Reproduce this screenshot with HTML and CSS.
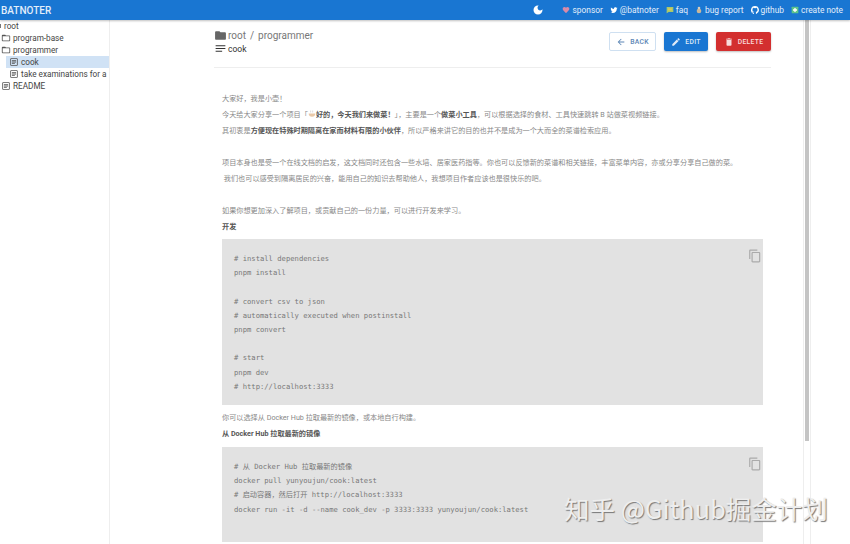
FILE: index.html
```html
<!DOCTYPE html>
<html lang="zh">
<head>
    <meta charset="UTF-8">
    <title>BatNoter - cook</title>
    <link rel="stylesheet" href="styles.css">
</head>
<body>
    <header class="topbar">
        <div class="brand">BATNOTER</div>
        <nav class="topnav">
            <svg class="moon" viewBox="0 0 24 24"><path fill="#fff" d="M12 3c-4.97 0-9 4.03-9 9s4.03 9 9 9 9-4.03 9-9c0-.46-.04-.92-.1-1.36-.98 1.37-2.58 2.26-4.4 2.26-2.98 0-5.4-2.42-5.4-5.4 0-1.81.89-3.42 2.26-4.4-.44-.06-.9-.1-1.36-.1z"/></svg>
            <a class="nav-link sponsor"><svg viewBox="0 0 24 24"><path fill="#d98aa8" d="M12 21.35l-1.45-1.32C5.4 15.36 2 12.28 2 8.5 2 5.42 4.42 3 7.5 3c1.74 0 3.41.81 4.5 2.09C13.09 3.81 14.76 3 16.5 3 19.58 3 22 5.42 22 8.5c0 3.78-3.4 6.86-8.55 11.54L12 21.35z"/></svg>sponsor</a>
            <a class="nav-link"><svg viewBox="0 0 24 24"><path fill="#fff" d="M22.46 6c-.77.35-1.6.58-2.46.69.88-.53 1.56-1.37 1.88-2.38-.83.5-1.75.85-2.72 1.05C18.37 4.5 17.26 4 16 4c-2.35 0-4.27 1.92-4.27 4.29 0 .34.04.67.11.98C8.28 9.09 5.11 7.38 3 4.79c-.37.63-.58 1.37-.58 2.15 0 1.49.75 2.81 1.91 3.56-.71 0-1.37-.2-1.95-.5v.03c0 2.08 1.48 3.82 3.44 4.21a4.22 4.22 0 0 1-1.93.07 4.28 4.28 0 0 0 4 2.98 8.521 8.521 0 0 1-5.33 1.84c-.34 0-.68-.02-1.02-.06C3.44 20.29 5.7 21 8.12 21 16 21 20.33 14.46 20.33 8.79c0-.19 0-.37-.01-.56.84-.6 1.56-1.36 2.14-2.23z"/></svg>@batnoter</a>
            <a class="nav-link"><svg viewBox="0 0 24 24"><path fill="#a9c96a" d="M2 3h20v15H8l-6 4z"/><path fill="#d8c860" d="M6 7h12v6H6z"/></svg>faq</a>
            <a class="nav-link"><svg viewBox="0 0 24 24"><ellipse cx="12" cy="15" rx="7" ry="7" fill="#c9b79a"/><circle cx="12" cy="6" r="4" fill="#d8cdbb"/></svg>bug report</a>
            <a class="nav-link"><svg viewBox="0 0 24 24"><path fill="#fff" d="M12 .3a12 12 0 0 0-3.8 23.4c.6.1.8-.3.8-.6v-2c-3.3.7-4-1.6-4-1.6-.6-1.4-1.4-1.8-1.4-1.8-1.1-.7.1-.7.1-.7 1.2.1 1.8 1.2 1.8 1.2 1.1 1.8 2.8 1.3 3.5 1 .1-.8.4-1.3.8-1.6-2.7-.3-5.5-1.3-5.5-5.9 0-1.3.5-2.4 1.2-3.2-.1-.3-.5-1.5.1-3.2 0 0 1-.3 3.3 1.2a11.500 11.500 0 0 1 6 0c2.300-1.500 3.300-1.200 3.300-1.200.6 1.700.2 2.900.1 3.200.8.800 1.200 1.900 1.200 3.200 0 4.600-2.800 5.600-5.500 5.900.4.400.8 1.100.8 2.200v3.300c0 .3.2.7.8.6A12 12 0 0 0 12 .3"/></svg>github</a>
            <a class="nav-link"><svg viewBox="0 0 24 24"><rect x="2" y="2" width="20" height="20" rx="2" fill="#5fc48a"/><path fill="#fff" d="M10 6h4v4h4v4h-4v4h-4v-4H6v-4h4z"/></svg>create note</a>
        </nav>
    </header>

    <div class="layout">
        <aside class="sidebar">
            <div class="tree-row root-row">root</div>
            <div class="tree-row"><svg viewBox="0 0 24 24"><path d="M20 6h-8l-2-2H4c-1.100 0-1.990.9-1.990 2L2 18c0 1.100.9 2 2 2h16c1.100 0 2-.9 2-2V8c0-1.100-.9-2-2-2zm0 12H4V8h16v10z"/></svg>program-base</div>
            <div class="tree-row"><svg viewBox="0 0 24 24"><path d="M20 6h-8l-2-2H4c-1.100 0-1.990.9-1.990 2L2 18c0 1.100.9 2 2 2h16c1.100 0 2-.9 2-2V8c0-1.100-.9-2-2-2zm0 12H4V8h16v10z"/></svg>programmer</div>
            <div class="tree-row nested selected"><svg viewBox="0 0 24 24"><path d="M19 5v14H5V5h14m0-2H5c-1.100 0-2 .9-2 2v14c0 1.100.9 2 2 2h14c1.100 0 2-.9 2-2V5c0-1.100-.9-2-2-2z"/><path d="M14 17H7v-2h7v2zm3-4H7v-2h10v2zm0-4H7V7h10v2z"/></svg>cook</div>
            <div class="tree-row nested"><svg viewBox="0 0 24 24"><path d="M19 5v14H5V5h14m0-2H5c-1.100 0-2 .9-2 2v14c0 1.100.9 2 2 2h14c1.100 0 2-.9 2-2V5c0-1.100-.9-2-2-2z"/><path d="M14 17H7v-2h7v2zm3-4H7v-2h10v2zm0-4H7V7h10v2z"/></svg>take examinations for a</div>
            <div class="tree-row"><svg viewBox="0 0 24 24"><path d="M19 5v14H5V5h14m0-2H5c-1.100 0-2 .9-2 2v14c0 1.100.9 2 2 2h14c1.100 0 2-.9 2-2V5c0-1.100-.9-2-2-2z"/><path d="M14 17H7v-2h7v2zm3-4H7v-2h10v2zm0-4H7V7h10v2z"/></svg>README</div>
        </aside>

        <main class="main">
            <div class="note-head">
                <div class="note-path">
                    <div class="crumbs"><svg viewBox="0 0 24 24"><path d="M10 4H4c-1.100 0-1.990.9-1.990 2L2 18c0 1.100.9 2 2 2h16c1.100 0 2-.9 2-2V8c0-1.100-.9-2-2-2h-8l-2-2z"/></svg>root<span class="sep">/</span>programmer</div>
                    <div class="note-name"><svg viewBox="0 0 24 24"><path d="M3 18h12v-2H3v2zM3 6v2h18V6H3zm0 7h18v-2H3v2z"/></svg>cook</div>
                </div>
                <div class="actions">
                    <button class="btn btn-back"><svg viewBox="0 0 24 24"><path d="M20 11H7.830l5.590-5.590L12 4l-8 8 8 8 1.410-1.410L7.830 13H20v-2z"/></svg>Back</button>
                    <button class="btn btn-edit"><svg viewBox="0 0 24 24"><path d="M3 17.250V21h3.750L17.810 9.940l-3.750-3.750L3 17.250zM20.710 7.040c.39-.39.39-1.020 0-1.410l-2.340-2.340c-.39-.39-1.020-.39-1.410 0l-1.830 1.830 3.750 3.750 1.830-1.830z"/></svg>Edit</button>
                    <button class="btn btn-delete"><svg viewBox="0 0 24 24"><path d="M6 19c0 1.100.9 2 2 2h8c1.100 0 2-.9 2-2V7H6v12zM19 4h-3.500l-1-1h-5l-1 1H5v2h14V4z"/></svg>Delete</button>
                </div>
            </div>

            <article class="note-body">
                <p>大家好，我是小壶！</p>
                <p>今天给大家分享一个项目「<svg class="emoji" viewBox="0 0 24 24"><path fill="#e9c9a8" d="M2 12h20c0 6-4 10-10 10S2 18 2 12z"/><path fill="none" stroke="#ccc" stroke-width="2" d="M8 9V3M14 9V3"/></svg><b>好的，今天我们来做菜！</b>」，主要是一个<b>做菜小工具</b>，可以根据选择的食材、工具快速跳转 B 站做菜视频链接。</p>
                <p class="gap-after">其初衷是<b>方便现在特殊时期隔离在家而材料有限的小伙伴</b>，所以严格来讲它的目的也并不是成为一个大而全的菜谱检索应用。</p>
                <p>项目本身也是受一个在线文档的启发，这文档同时还包含一些水培、居家医药指等。你也可以反馈新的菜谱和相关链接，丰富菜单内容，亦或分享分享自己做的菜。</p>
                <p class="gap-after">&nbsp;我们也可以感受到隔离居民的兴奋，能用自己的知识去帮助他人，我想项目作者应该也是很快乐的吧。</p>
                <p>如果你想更加深入了解项目，或贡献自己的一份力量，可以进行开发来学习。</p>
                <p><b>开发</b></p>
                <div class="code-block first-block">
                    <svg class="copy" viewBox="0 0 24 24"><path d="M16 1H4c-1.100 0-2 .9-2 2v14h2V3h12V1zm3 4H8c-1.100 0-2 .9-2 2v14c0 1.100.9 2 2 2h11c1.100 0 2-.9 2-2V7c0-1.100-.9-2-2-2zm0 16H8V7h11v14z"/></svg>
<pre># install dependencies
pnpm install

# convert csv to json
# automatically executed when postinstall
pnpm convert

# start
pnpm dev
# http://localhost:3333
</pre>
                </div>
                <p>你可以选择从 Docker Hub 拉取最新的镜像，或本地自行构建。</p>
                <p><b>从 Docker Hub 拉取最新的镜像</b></p>
                <div class="code-block">
                    <svg class="copy" viewBox="0 0 24 24"><path d="M16 1H4c-1.100 0-2 .9-2 2v14h2V3h12V1zm3 4H8c-1.100 0-2 .9-2 2v14c0 1.100.9 2 2 2h11c1.100 0 2-.9 2-2V7c0-1.100-.9-2-2-2zm0 16H8V7h11v14z"/></svg>
<pre># 从 Docker Hub 拉取最新的镜像
docker pull yunyoujun/cook:latest
# 启动容器，然后打开 http://localhost:3333
docker run -it -d --name cook_dev -p 3333:3333 yunyoujun/cook:latest

</pre>
                </div>
            </article>
        </main>

        <div class="scroll-track"><div class="scroll-thumb"></div></div>
        <div class="right-gap"></div>
    </div>

    <div class="watermark">知乎 @Github掘金计划</div>
</body>
</html>
```

FILE: styles.css
```css
html, body {
    height: 100%;
}
body {
    margin: 0;
    overflow: hidden;
    background-color: #fff;
    color: #333;
    font-family: Roboto, "Noto Sans CJK SC", sans-serif;
    display: flex;
    flex-direction: column;
}
svg {
    display: block;
    flex-shrink: 0;
}

/* top bar */
.topbar {
    height: 20px;
    flex-shrink: 0;
    display: flex;
    align-items: center;
    justify-content: space-between;
    background-color: #1976d2;
    color: #e3eefa;
    box-shadow: 0 1px 2px rgba(0, 0, 0, 0.25);
    padding: 0 7px 0 1px;
    position: relative;
}
.brand {
    font-size: 10px;
    font-weight: 500;
}
.topnav {
    display: flex;
    align-items: center;
    gap: 7px;
    font-size: 8.4px;
}
.moon {
    width: 12px;
    height: 12px;
    margin-right: 11px;
}
.nav-link {
    display: flex;
    align-items: center;
    gap: 2px;
}
.nav-link svg {
    width: 8px;
    height: 8px;
}

/* layout */
.layout {
    flex: 1;
    display: flex;
    min-height: 0;
}
.sidebar {
    width: 109px;
    flex-shrink: 0;
    border-right: 1px solid #eee;
    font-size: 8.2px;
    color: #444;
    overflow: hidden;
}
.tree-row {
    height: 12px;
    display: flex;
    align-items: center;
    gap: 2px;
    padding-left: 1px;
    white-space: nowrap;
}
.tree-row svg {
    width: 10px;
    height: 10px;
    fill: #555;
}
.root-row {
    padding-left: 0;
    gap: 3px;
}
.root-row::before {
    content: "";
    width: 1px;
    height: 4px;
    background-color: #777;
}
.nested {
    padding-left: 9px;
}
.selected {
    margin-left: 6px;
    padding-left: 3px;
    background-color: #d0e2f5;
}

/* note */
.main {
    flex: 1;
    min-width: 0;
    padding: 0 32px 0 104px;
    overflow: hidden;
}
.note-head {
    height: 47px;
    display: flex;
    justify-content: space-between;
    align-items: flex-start;
    border-bottom: 1px solid #eee;
}
.crumbs {
    display: flex;
    align-items: center;
    margin-top: 9px;
    height: 13px;
    font-size: 10px;
    color: #777;
}
.crumbs svg {
    width: 13px;
    height: 13px;
    fill: #666;
    margin-right: 1px;
}
.sep {
    margin: 0 4px;
}
.note-name {
    display: flex;
    align-items: center;
    gap: 1px;
    height: 13px;
    font-size: 8.5px;
    color: #333;
}
.note-name svg {
    width: 13px;
    height: 13px;
    fill: #333;
}
.actions {
    display: flex;
    gap: 8px;
    margin-top: 12px;
}
.btn {
    height: 19px;
    display: flex;
    align-items: center;
    justify-content: center;
    gap: 4px;
    padding: 0;
    border: none;
    border-radius: 2px;
    font-family: Roboto, sans-serif;
    font-size: 6.8px;
    font-weight: 500;
    letter-spacing: 0.3px;
    text-transform: uppercase;
}
.btn svg {
    width: 10px;
    height: 10px;
    fill: currentColor;
}
.btn-back {
    width: 47px;
    background-color: #fff;
    color: #5c86b5;
    border: 1px solid #cfe0f1;
}
.btn-edit {
    width: 44px;
    background-color: #1976d2;
    color: #dfeaf7;
    box-shadow: 0 1px 2px rgba(0, 0, 0, 0.25);
}
.btn-delete {
    width: 55px;
    background-color: #d32f2f;
    color: #f8dcdc;
    box-shadow: 0 1px 2px rgba(0, 0, 0, 0.25);
}

/* markdown */
.note-body {
    padding: 23px 8px 0;
    font-size: 7.16px;
    line-height: 16px;
    color: #888;
}
.note-body p {
    margin: 0;
    white-space: nowrap;
}
.note-body p.gap-after {
    margin-bottom: 16px;
}
.note-body b {
    color: #555;
    font-weight: 700;
}
.emoji {
    display: inline-block;
    width: 8px;
    height: 9px;
    vertical-align: -1px;
}
.code-block {
    position: relative;
    margin: 5px 0;
    background-color: #e2e2e2;
}
.first-block {
    margin-top: 4px;
}
.code-block pre {
    margin: 0;
    padding: 13px 12px 11px;
    font-family: "DejaVu Sans Mono", "Noto Sans CJK SC", monospace;
    font-size: 7.2px;
    line-height: 14.2px;
    color: #777;
}
.copy {
    position: absolute;
    top: 10px;
    right: 1px;
    width: 14px;
    height: 14px;
    fill: #aaa;
}

/* scrollbar */
.scroll-track {
    width: 8px;
    flex-shrink: 0;
    border-left: 1px solid #eee;
    border-right: 1px solid #eee;
    box-sizing: border-box;
}
.scroll-thumb {
    width: 4px;
    height: 421px;
    margin-left: 1px;
    background-color: #c4c4c4;
}
.right-gap {
    width: 39px;
    flex-shrink: 0;
}

/* watermark */
.watermark {
    position: absolute;
    left: 564px;
    top: 490px;
    font-family: "Noto Sans CJK SC", sans-serif;
    font-size: 25.5px;
    line-height: 36px;
    color: #eee;
    text-shadow: 1px 1px 1px #777;
    white-space: nowrap;
}
```
